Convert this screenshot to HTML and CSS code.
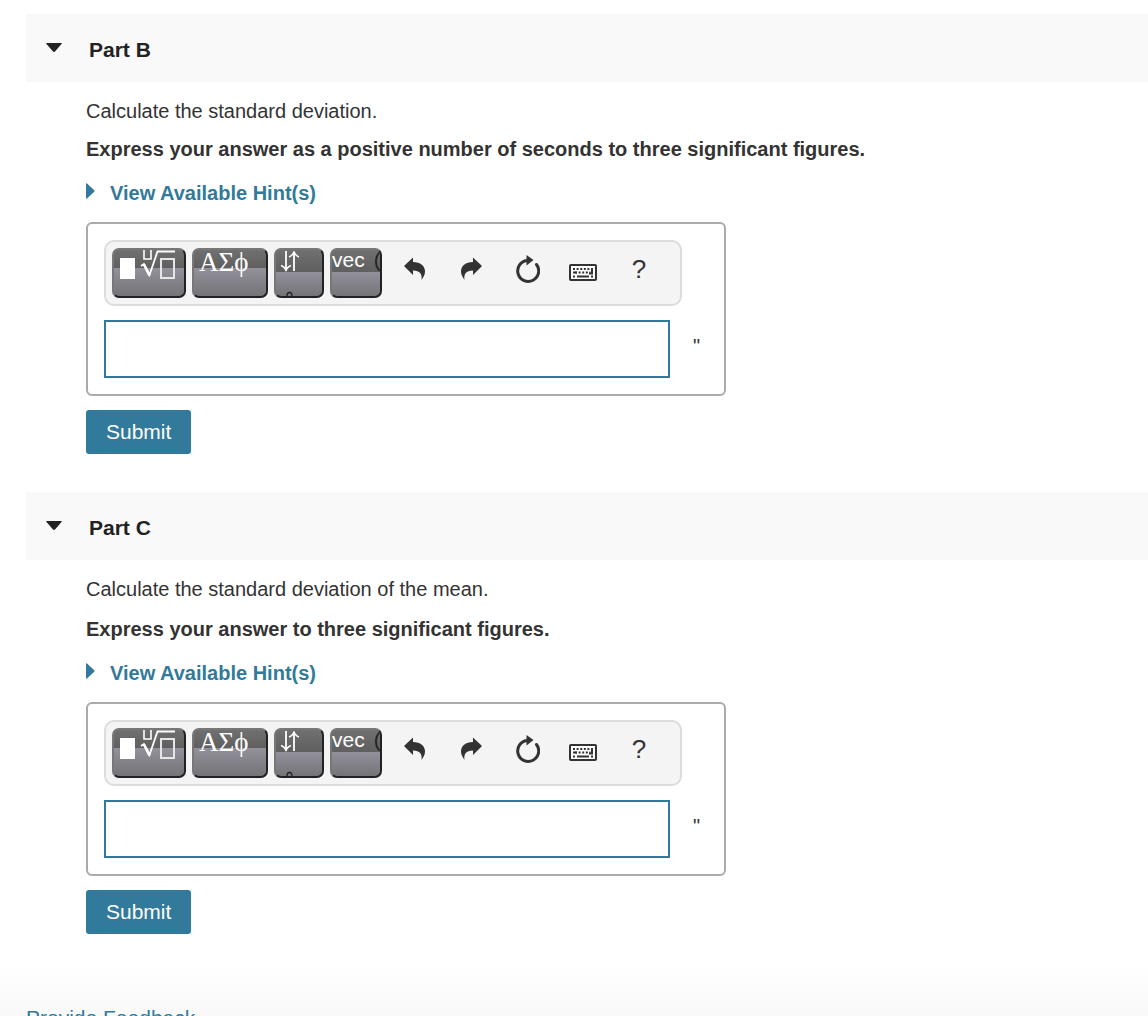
FILE: index.html
```
<!DOCTYPE html>
<html lang="en">
<head>
  <meta charset="UTF-8" />
  <meta name="viewport" content="width=device-width, initial-scale=1.0"/>
  <title>Standard deviation</title>
  <link rel="stylesheet" href="styles.css">
</head>
<body>
  <!-- shared toolbar icons -->
  <svg class="icon-defs" aria-hidden="true">
    <symbol id="icon-root" viewBox="0 0 70 46">
      <rect x="6" y="8" width="15" height="21" fill="#fff"/>
      <path d="M30 0V9H37V0" fill="none" stroke="#fff" stroke-width="1.600"/>
      <path d="M27 16l3-2 5.500 11L43.500 1.500H61" fill="none" stroke="#fff" stroke-width="1.800"/>
      <path d="M30 14.500l5.500 11" stroke="#fff" stroke-width="2.600"/>
      <rect x="47" y="9" width="13" height="19" fill="none" stroke="#e6e6e6" stroke-width="2"/>
    </symbol>
    <symbol id="icon-arrows" viewBox="0 0 46 46">
      <path d="M10 1v19M18 21V2" fill="none" stroke="#fff" stroke-width="1.800"/>
      <path d="M5 15.500q4 1.500 5 5.500 1-4 5-5.500M13 7q4-1.500 5-5.500 1 4 5 5.500" fill="none" stroke="#fff" stroke-width="1.400"/>
      <path d="M11 46q0-3.500 2.500-3.500t2.500 3.500" fill="none" stroke="#222" stroke-width="1.300"/>
    </symbol>
    <symbol id="icon-undo" viewBox="0 0 22 24">
      <path d="M0 9L9 0.500V5C16.500 5 21 9 21 14.500c0 3-1.500 5.500-3.500 8.500 .8-6-1.500-9.500-8.500-9.500V18z" fill="#333"/>
    </symbol>
    <symbol id="icon-reset" viewBox="0 0 26 28">
      <path d="M22.500 9.500A10.500 10.500 0 1 1 13 5.500" fill="none" stroke="#333" stroke-width="3" stroke-linecap="round"/>
      <path d="M12.500 0l7 5-7 5.500z" fill="#333"/>
    </symbol>
    <symbol id="icon-keyboard" viewBox="0 0 28 17">
      <rect x="1" y="1" width="26" height="15" rx="1" fill="#fff" stroke="#333" stroke-width="2"/>
      <path d="M4 5h16.500M6 8.500h15.500" stroke="#333" stroke-width="2" stroke-dasharray="2 1.600"/>
      <path d="M4 8.500h4M4 12.500h2M8 12.500h12M22 12.500h2M23 4v5.500h-3" fill="none" stroke="#333" stroke-width="2"/>
    </symbol>
  </svg>

  <main class="page">
    <section class="part">
      <button class="part-header" type="button" aria-expanded="true">
        <svg class="caret" viewBox="0 0 16 9" aria-hidden="true"><path d="M1 0h14q1.500 0 .5 1L9 8.500q-1 .8-2 0L.5 1Q-.5 0 1 0z"/></svg>
        Part B
      </button>
      <div class="part-body">
        <p class="question">Calculate the standard deviation.</p>
        <p class="instructions">Express your answer as a positive number of seconds to three significant figures.</p>
        <button class="hints" type="button" aria-expanded="false">
          <svg class="hint-caret" viewBox="0 0 9 16" aria-hidden="true"><path d="M0 1q0-1.200 1-.5l7 6.500q1 1 0 2l-7 6.500q-1 .7-1-.5z"/></svg>
          View Available Hint(s)
        </button>
        <div class="answer-box">
          <div class="toolbar">
            <button class="key key-root" type="button" aria-label="Templates"><svg viewBox="0 0 70 46"><use href="#icon-root"/></svg></button>
            <button class="key key-greek" type="button">ΑΣϕ</button>
            <button class="key key-arrows" type="button" aria-label="Arrows"><svg viewBox="0 0 46 46"><use href="#icon-arrows"/></svg></button>
            <button class="key key-vec" type="button">vec <span class="paren">(</span></button>
            <div class="actions">
              <button class="action" type="button" aria-label="Undo"><svg class="undo" viewBox="0 0 22 24"><use href="#icon-undo"/></svg></button>
              <button class="action" type="button" aria-label="Redo"><svg class="undo redo" viewBox="0 0 22 24"><use href="#icon-undo"/></svg></button>
              <button class="action" type="button" aria-label="Reset"><svg class="reset" viewBox="0 0 26 28"><use href="#icon-reset"/></svg></button>
              <button class="action" type="button" aria-label="Keyboard shortcuts"><svg class="keyboard" viewBox="0 0 28 17"><use href="#icon-keyboard"/></svg></button>
              <button class="action help" type="button">?</button>
            </div>
          </div>
          <div class="answer-row">
            <input class="answer-input" id="answerB" type="text" aria-label="Part B answer">
            <label class="unit" for="answerB">"</label>
          </div>
        </div>
        <button class="submit" type="submit">Submit</button>
      </div>
    </section>

    <section class="part">
      <button class="part-header" type="button" aria-expanded="true">
        <svg class="caret" viewBox="0 0 16 9" aria-hidden="true"><path d="M1 0h14q1.500 0 .5 1L9 8.500q-1 .8-2 0L.5 1Q-.5 0 1 0z"/></svg>
        Part C
      </button>
      <div class="part-body">
        <p class="question">Calculate the standard deviation of the mean.</p>
        <p class="instructions">Express your answer to three significant figures.</p>
        <button class="hints" type="button" aria-expanded="false">
          <svg class="hint-caret" viewBox="0 0 9 16" aria-hidden="true"><path d="M0 1q0-1.200 1-.5l7 6.500q1 1 0 2l-7 6.500q-1 .7-1-.5z"/></svg>
          View Available Hint(s)
        </button>
        <div class="answer-box">
          <div class="toolbar">
            <button class="key key-root" type="button" aria-label="Templates"><svg viewBox="0 0 70 46"><use href="#icon-root"/></svg></button>
            <button class="key key-greek" type="button">ΑΣϕ</button>
            <button class="key key-arrows" type="button" aria-label="Arrows"><svg viewBox="0 0 46 46"><use href="#icon-arrows"/></svg></button>
            <button class="key key-vec" type="button">vec <span class="paren">(</span></button>
            <div class="actions">
              <button class="action" type="button" aria-label="Undo"><svg class="undo" viewBox="0 0 22 24"><use href="#icon-undo"/></svg></button>
              <button class="action" type="button" aria-label="Redo"><svg class="undo redo" viewBox="0 0 22 24"><use href="#icon-undo"/></svg></button>
              <button class="action" type="button" aria-label="Reset"><svg class="reset" viewBox="0 0 26 28"><use href="#icon-reset"/></svg></button>
              <button class="action" type="button" aria-label="Keyboard shortcuts"><svg class="keyboard" viewBox="0 0 28 17"><use href="#icon-keyboard"/></svg></button>
              <button class="action help" type="button">?</button>
            </div>
          </div>
          <div class="answer-row">
            <input class="answer-input" id="answerC" type="text" aria-label="Part C answer">
            <label class="unit" for="answerC">"</label>
          </div>
        </div>
        <button class="submit" type="submit">Submit</button>
      </div>
    </section>

    <footer class="footer">
      <a class="feedback" href="#">Provide Feedback</a>
    </footer>
  </main>
</body>
</html>
```
FILE: styles.css
```
* {
  box-sizing: border-box;
}
body {
  margin: 0;
  background: #fff;
  color: #333;
  font-family: "Liberation Sans", Arial, sans-serif;
  font-size: 20px;
  line-height: 24px;
}
button, input {
  font: inherit;
  color: inherit;
  margin: 0;
}
button {
  border: none;
  padding: 0;
  background: none;
  cursor: pointer;
}
svg {
  display: block;
}
.icon-defs {
  display: none;
}
.page {
  height: 100vh;
  overflow: hidden;
  padding-top: 14px;
}
.part {
  margin: 0 0 38px 26px;
}
.part-header {
  display: flex;
  align-items: center;
  gap: 27px;
  width: 100%;
  height: 68px;
  padding: 3px 20px 0;
  background: #f9f9f9;
  color: #222;
  font-size: 21px;
  font-weight: bold;
}
.caret {
  width: 16px;
  height: 9px;
  fill: #222;
  margin-bottom: 4px;
}
.part-body {
  padding: 17px 20px 0 60px;
}
.question {
  margin: 0 0 14px;
}
.part + .part .question {
  margin-bottom: 16px;
}
.instructions {
  margin: 0 0 20px;
  font-weight: bold;
}
.hints {
  display: flex;
  align-items: center;
  gap: 15px;
  margin-bottom: 17px;
  color: #317a9b;
  font-weight: bold;
}
.hint-caret {
  width: 9px;
  height: 16px;
  fill: #317a9b;
  margin-bottom: 5px;
}
.answer-box {
  max-width: 640px;
  padding: 16px;
  border: 2px solid #aaa;
  border-radius: 6px;
}
.toolbar {
  display: flex;
  gap: 6px;
  max-width: 578px;
  padding: 6px;
  background: #f4f4f4;
  border: 2px solid #dcdcdc;
  border-radius: 10px;
}
.key {
  height: 50px;
  overflow: hidden;
  border: 2px solid;
  border-color: #777 #222 #222 #777;
  border-radius: 7px;
  background: linear-gradient(#707070, #5f5f5f 40%, #92909a 40%, #757478);
  color: #fff;
  display: flex;
  align-items: flex-start;
  white-space: nowrap;
}
.key-root {
  width: 74px;
}
.key-greek {
  width: 76px;
  padding-left: 5px;
  font-family: "Liberation Serif", "Times New Roman", serif;
  font-size: 27px;
}
.key-arrows {
  width: 50px;
}
.key-vec {
  width: 52px;
  gap: 9px;
  font-size: 21px;
  line-height: 20px;
}
.key-arrows, .key-vec {
  background: linear-gradient(#707070, #5f5f5f 48%, #92909a 48%, #757478);
}
.paren {
  color: #222;
}
.actions {
  display: flex;
  gap: 6px;
  margin-left: 2px;
}
.action {
  display: flex;
  align-items: center;
  justify-content: center;
  width: 50px;
  height: 42px;
}
.undo {
  width: 22px;
  height: 24px;
}
.redo {
  transform: scaleX(-1);
}
.reset {
  width: 26px;
  height: 28px;
}
.keyboard {
  width: 28px;
  height: 17px;
  margin-top: 6px;
}
.help {
  font-size: 26px;
}
.answer-row {
  display: flex;
  align-items: center;
  gap: 23px;
  margin-top: 14px;
}
.answer-input {
  flex: 1;
  min-width: 0;
  max-width: 566px;
  height: 58px;
  padding: 0 12px;
  border: 2px solid #317a9b;
  border-radius: 0;
  background: #fff;
  outline: none;
}
.unit {
  padding-bottom: 6px;
}
.submit {
  display: block;
  margin-top: 14px;
  padding: 10px 20px;
  border-radius: 3px;
  background: #317a9b;
  color: #fff;
  font-size: 21px;
}
.footer {
  margin-top: -8px;
  padding: 42px 26px;
  background: linear-gradient(#fff, #f9f9f9 50px);
}
.feedback {
  color: #317a9b;
  font-size: 21px;
  text-decoration: none;
}
```
